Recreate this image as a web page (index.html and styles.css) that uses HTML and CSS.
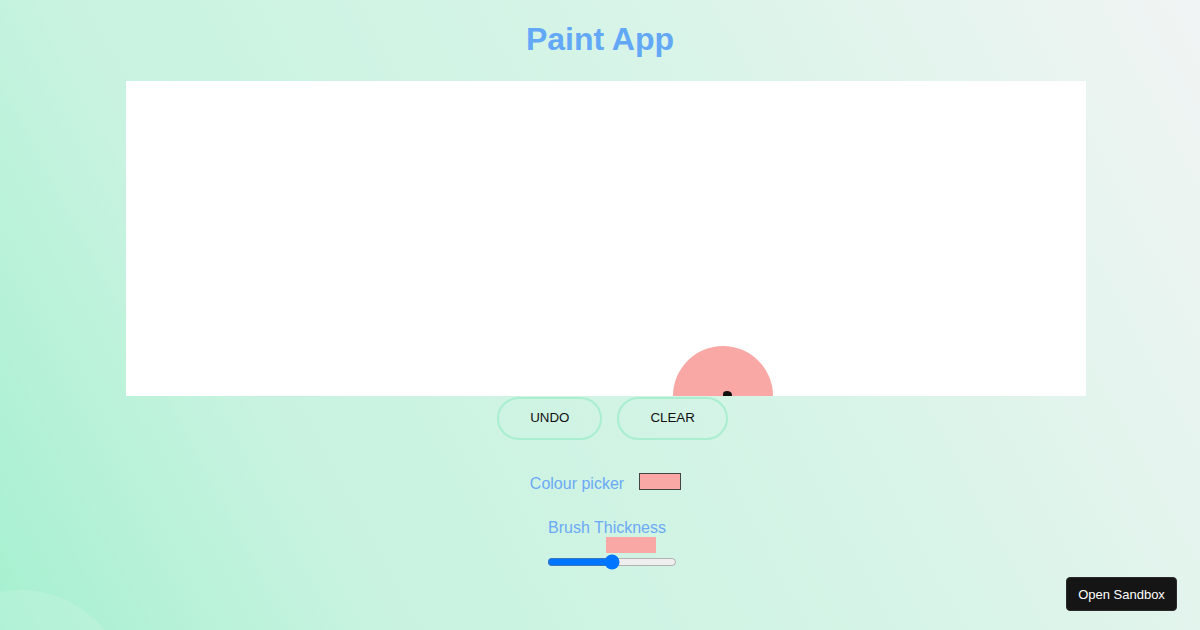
FILE: index.html
```html
<!DOCTYPE html>
<html>
<head>
<meta charset="utf-8">
<link rel="stylesheet" href="styles.css">
</head>
<body>
<div class="blob"></div>
<main class="app">
  <h1 class="title">Paint App</h1>
  <div class="canvas">
    <div class="brush-dot"></div>
    <div class="cursor-mark"></div>
  </div>
  <div class="actions">
    <button class="btn">UNDO</button>
    <button class="btn">CLEAR</button>
  </div>
  <div class="picker-row">
    <label class="label">Colour picker</label>
    <span class="swatch"></span>
  </div>
  <div class="thickness">
    <label class="label thick-label">Brush Thickness</label>
    <span class="preview"></span>
    <input class="range" type="range" min="0" max="100" value="50">
  </div>
</main>
<button class="sandbox">Open Sandbox</button>
</body>
</html>
```

FILE: styles.css
```css
html, body {
  margin: 0;
  height: 100%;
}
body {
  position: relative;
  overflow: hidden;
  font-family: "Liberation Sans", Arial, sans-serif;
  background: linear-gradient(62deg, #a6f0d0 0%, #c8f3e0 25%, #d6f4e7 60%, #f1f4f4 100%);
}
.blob {
  position: absolute;
  left: -90px;
  top: 590px;
  width: 220px;
  height: 220px;
  border-radius: 50%;
  background: rgba(255, 255, 255, 0.13);
}
.app {
  position: relative;
  display: flex;
  flex-direction: column;
  align-items: center;
  padding-left: 12px;
}
.title {
  margin: 21px 0 23px -12px;
  font-size: 32px;
  font-weight: bold;
  line-height: 37px;
  color: #63a8f7;
}
.canvas {
  position: relative;
  width: 960px;
  height: 315px;
  background: #fff;
  overflow: hidden;
}
.brush-dot {
  position: absolute;
  left: 547px;
  top: 265px;
  width: 100px;
  height: 100px;
  border-radius: 50%;
  background: #f9a8a5;
}
.cursor-mark {
  position: absolute;
  left: 597px;
  top: 310px;
  width: 9px;
  height: 7px;
  border-radius: 50% 60% 0 0;
  background: #111;
}
.actions {
  display: flex;
  gap: 15px;
  padding-left: 13px;
  margin-top: 1px;
}
.btn {
  height: 43px;
  padding: 0 31px 2px;
  border: 2px solid #a9efcf;
  border-radius: 22px;
  background: transparent;
  font-family: "Liberation Sans", Arial, sans-serif;
  font-size: 13.33px;
  color: #111;
}
.picker-row {
  display: flex;
  align-items: center;
  margin-top: 29px;
  padding-left: 11px;
  margin-left: -12px;
}
.label {
  font-size: 16px;
  color: #6ba9f5;
}
.picker-row .label {
  margin-right: 15px;
  margin-top: 6px;
}
.swatch {
  width: 40px;
  height: 15px;
  border: 1px solid #444;
  background: #f9a8a5;
}
.thickness {
  display: flex;
  flex-direction: column;
  align-items: flex-start;
  width: 130px;
  margin-top: 26px;
  padding-left: 12px;
}
.thick-label {
  margin-left: 1px;
  line-height: 18px;
}
.preview {
  margin-top: 0;
  margin-left: 59px;
  width: 50px;
  height: 16px;
  background: #f9a8a5;
}
.range {
  margin: 1px 0 0 0;
  width: 130px;
}
.sandbox {
  position: absolute;
  right: 23px;
  bottom: 19px;
  width: 111px;
  height: 34px;
  border: 1px solid #2a2a2a;
  border-radius: 4px;
  background: #151515;
  color: #fff;
  font-family: "Liberation Sans", Arial, sans-serif;
  font-size: 13px;
}
```
